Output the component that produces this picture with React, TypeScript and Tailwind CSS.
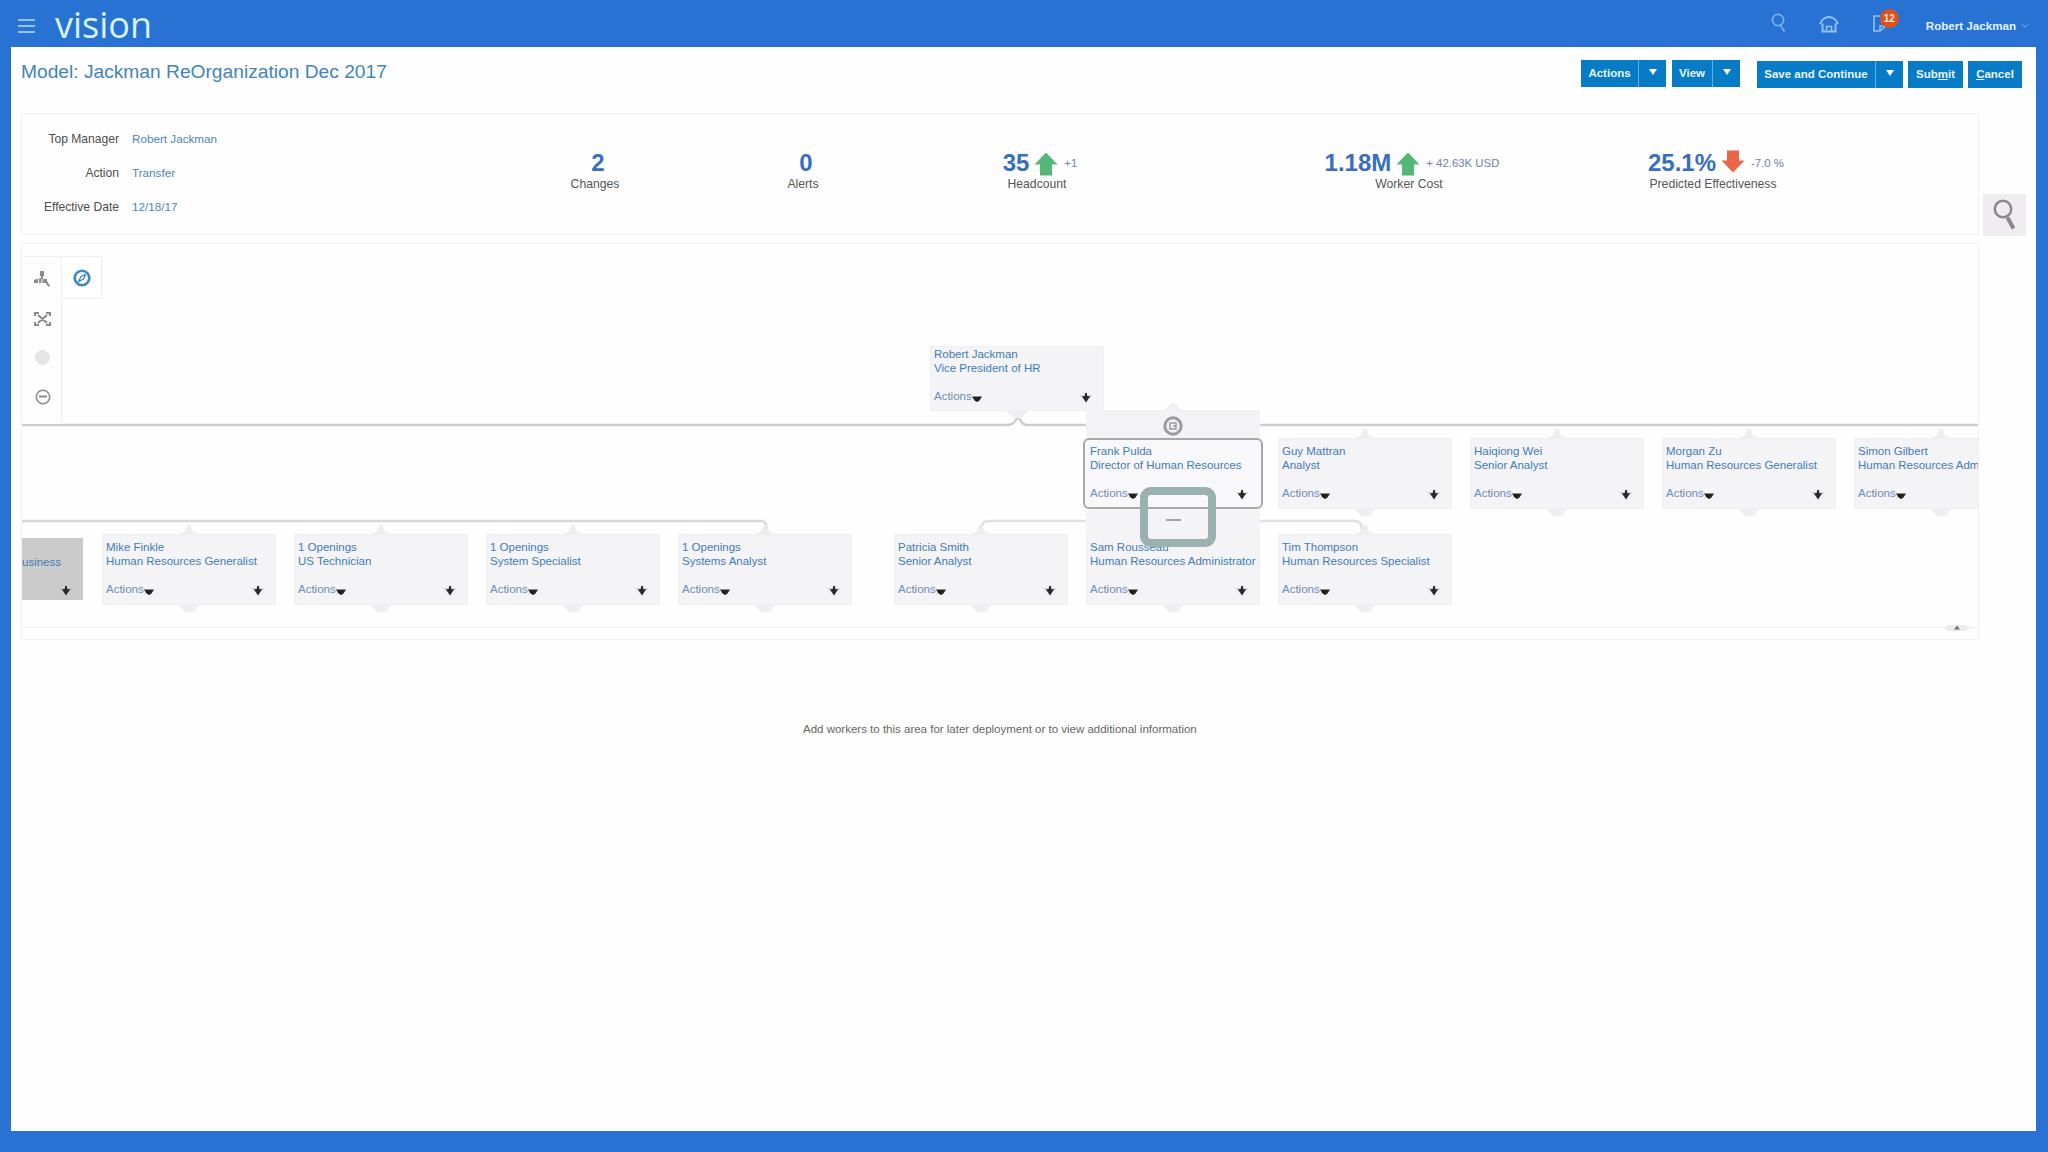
import { ChevronDown, Search } from "lucide-react";

type Person = { name: string; title: string; pos: string; top?: boolean; bottom?: boolean };

const people: Person[] = [
  { name: "Robert Jackman", title: "Vice President of HR", pos: "left-[908px] top-[102px] h-[65px]", bottom: true },
  { name: "Guy Mattran", title: "Analyst", pos: "left-[1256px] top-[194px] h-[71px]", top: true, bottom: true },
  { name: "Haiqiong Wei", title: "Senior Analyst", pos: "left-[1448px] top-[194px] h-[71px]", top: true, bottom: true },
  { name: "Morgan Zu", title: "Human Resources Generalist", pos: "left-[1640px] top-[194px] h-[71px]", top: true, bottom: true },
  { name: "Simon Gilbert", title: "Human Resources Adm", pos: "left-[1832px] top-[194px] h-[71px]", top: true, bottom: true },
  { name: "Mike Finkle", title: "Human Resources Generalist", pos: "left-[80px] top-[290px] h-[71px]", top: true, bottom: true },
  { name: "1 Openings", title: "US Technician", pos: "left-[272px] top-[290px] h-[71px]", top: true, bottom: true },
  { name: "1 Openings", title: "System Specialist", pos: "left-[464px] top-[290px] h-[71px]", top: true, bottom: true },
  { name: "1 Openings", title: "Systems Analyst", pos: "left-[656px] top-[290px] h-[71px]", top: true, bottom: true },
  { name: "Patricia Smith", title: "Senior Analyst", pos: "left-[872px] top-[290px] h-[71px]", top: true, bottom: true },
  { name: "Sam Rousseau", title: "Human Resources Administrator", pos: "left-[1064px] top-[290px] h-[71px]", bottom: true },
  { name: "Tim Thompson", title: "Human Resources Specialist", pos: "left-[1256px] top-[290px] h-[71px]", top: true, bottom: true },
];

function Caret() {
  return (
    <svg width="10" height="6" viewBox="0 0 10 6" className="mt-[5px]">
      <path d="M0 0.5h10L7.5 4.5 5 6 2.5 4.5z" fill="#222" />
    </svg>
  );
}

function DownMark() {
  return (
    <svg width="12" height="10" viewBox="0 0 12 10">
      <path d="M0.5 2.5 6 6l5.5-3.5" fill="none" stroke="#a5a5a8" />
      <path d="M5 0h2v2.5l3 1L6 9.5 2 3.5l3-1z" fill="#2b2b2b" />
    </svg>
  );
}

function CardBody({ name, title }: { name: string; title: string }) {
  return (
    <>
      <div className="whitespace-nowrap text-[11.5px] leading-[13.6px] text-[#3f7db5]">
        <div>{name}</div>
        <div>{title}</div>
      </div>
      <div className="mt-auto flex items-center justify-between pr-[11px]">
        <div className="flex items-center text-[11.5px] leading-[14px] text-[#6f8dbb]">
          Actions
          <Caret />
        </div>
        <div className="mt-[4px]"><DownMark /></div>
      </div>
    </>
  );
}

function PersonCard({ p }: { p: Person }) {
  const root = !p.top && p.name === "Robert Jackman";
  return (
    <div
      className={`absolute flex w-[174px] flex-col border border-[#efeef1] bg-[#f4f3f5] pl-[3px] ${root ? "pb-[7px] pt-[1px]" : "pb-[8px] pt-[6px]"} ${p.pos}`}
    >
      <CardBody name={p.name} title={p.title} />
      {p.top && (
        <svg width="22" height="10" viewBox="0 0 22 10" className="absolute left-[75px] top-[-10px]">
          <path d="M9 0h4c0 5 3 8 9 10H0c6-2 9-5 9-10z" fill="#ececef" />
        </svg>
      )}
      {p.bottom && (
        <svg width="22" height="8" viewBox="0 0 22 8" className="absolute bottom-[-9px] left-[75px]">
          <path d="M0 0h22l-7 7.5H8z" fill="#efeef1" />
        </svg>
      )}
    </div>
  );
}

function Arrow({ down }: { down?: boolean }) {
  return down ? (
    <svg width="24" height="23" viewBox="0 0 24 23" className="mb-[3px]">
      <path d="M6 0.5h12v10h5.5L12 22.5 0.5 10.5H6z" fill="#ea6447" />
    </svg>
  ) : (
    <svg width="24" height="24" viewBox="0 0 24 24" className="mt-[3px]">
      <path d="M12 0.5 23.5 12.5H18v11H6v-11H0.5z" fill="#55b777" />
    </svg>
  );
}

function Metric({ value, label, delta, down, className }: {
  value: string; label: string; delta?: string; down?: boolean; className?: string;
}) {
  return (
    <div className={`flex w-[200px] shrink-0 flex-col items-center pt-[35px] ${className ?? ""}`}>
      <div className="flex h-[27px] items-center pl-[6px]">
        <span className="text-[24px] font-bold leading-[27px] text-[#376fbd]">{value}</span>
        {delta && (
          <>
            <span className="ml-[5px]"><Arrow down={down} /></span>
            <span className="ml-[6px] mt-[2px] whitespace-nowrap text-[11.4px] text-[#7280ab]">{delta}</span>
          </>
        )}
      </div>
      <div className="whitespace-nowrap text-[12.2px] leading-[16px] text-[#555]">{label}</div>
    </div>
  );
}

function Info({ label, value }: { label: string; value: string }) {
  return (
    <div className="flex h-[34px] items-center text-[11.7px]">
      <span className="w-[97px] text-right text-[12.1px] text-[#4c4c4c]">{label}</span>
      <span className="ml-[13px] text-[#4a86bd]">{value}</span>
    </div>
  );
}

function SplitButton({ label, className }: { label: string; className: string }) {
  return (
    <div className={`flex h-[27px] bg-[#077bc6] ${className}`}>
      <span className="flex flex-1 items-center justify-center border-r border-[#5fb1e4]">{label}</span>
      <span className="flex w-[27px] items-center justify-center">
        <svg width="8" height="6" viewBox="0 0 8 6" className="-mt-1"><path d="M0 0h8L4 6z" fill="#fff" /></svg>
      </span>
    </div>
  );
}

function Header() {
  return (
    <header className="flex h-[47px] items-center">
      <div className="ml-[18px] mt-[5px] flex w-[17px] flex-col gap-[4px]">
        <div className="h-[2px] bg-[#8fc4f2]" />
        <div className="h-[2px] bg-[#8fc4f2]" />
        <div className="h-[2px] bg-[#8fc4f2]" />
      </div>
      <div className="ml-[20px] mt-[2px] font-['Open_Sans'] text-[36px] font-medium leading-[47px] text-[#d9f2ff]">vision</div>
      <div className="ml-auto flex items-center pr-[18px] text-[#8fc1f2]">
        <svg width="16" height="20" viewBox="0 0 16 20" fill="none" stroke="#7eb2ee" strokeWidth="1.6" className="mb-[2px]">
          <circle cx="8" cy="7" r="5.600" />
          <path d="m10.500 12.500 4 6" />
        </svg>
        <svg width="20" height="18" viewBox="0 0 20 18" fill="none" stroke="currentColor" strokeWidth="1.6" className="ml-[33px]">
          <path d="M1 9q3-7 9-7t9 7M3.500 8.500v8h13v-8" strokeWidth="2" />
          <path d="M7.500 16v-4.500h5V16" />
        </svg>
        <div className="relative ml-[34px] h-[20px] w-[20px]">
          <svg width="16" height="19" viewBox="0 0 16 19" fill="none" stroke="currentColor" strokeWidth="1.6">
            <path d="M7 2H1v15h6l6-5V9M7 17v-5h6" />
          </svg>
          <div className="absolute left-[7px] top-[-5px] flex h-[19px] w-[19px] items-center justify-center rounded-full bg-[#d9531e] text-[10px] font-bold text-[#ffe1cf]">12</div>
        </div>
        <span className="ml-[33px] mt-[4px] text-[11.6px] font-bold text-[#e4f3ff]">Robert Jackman</span>
        <ChevronDown size={10} className="ml-[4px] mt-[5px]" />
      </div>
    </header>
  );
}

function Connectors() {
  return (
    <svg width="1957" height="396" viewBox="0 0 1957 396" fill="none" className="absolute left-0 top-0">
      <path d="M0 181h985q6 0 8-4l3-4 3 4q2 4 6 4h952" stroke="#cbcdd1" strokeWidth="2.5" />
      <path d="M0 277h739q6 0 6 10" stroke="#d6d8db" strokeWidth="2.5" />
      <path d="M959 287q0-10 7-10h367q7 0 7 10" stroke="#dfe1e4" strokeWidth="2.5" />
    </svg>
  );
}

function Toolbar() {
  return (
    <div className="absolute left-[2px] top-[12px] flex">
      <div className="flex h-[168px] w-[38px] flex-col items-center gap-[23px] border-r border-t border-[#f1f0f2] bg-[#fdfdfd] pt-[14px] text-[#8b8b8b]">
        <svg width="17" height="17" viewBox="0 0 17 17" fill="currentColor">
          <path d="M6 0h4v5H9v3h4v2l3 5-1.500 1-3-4H0V9l3-1 4-1V5H6z" />
          <path d="M4.500 8v4M8 8v4" stroke="#fff" />
        </svg>
        <svg width="17" height="14" viewBox="0 0 17 14" fill="none" stroke="currentColor" strokeWidth="2" className="my-px">
          <path d="M1 4V1h4M12 1h4v3M16 10v3h-4M5 13H1v-3M4 3l9 8M13 3 4 11" />
        </svg>
        <div className="h-[15px] w-[15px] rounded-full bg-[#e5e5e5]" />
        <svg width="16" height="16" viewBox="0 0 16 16" fill="none" stroke="currentColor" strokeWidth="1.5" className="mt-px">
          <circle cx="8" cy="8" r="6.700" />
          <path d="M4 7.500h8" strokeWidth="2" />
        </svg>
      </div>
      <div className="flex h-[43px] w-[40px] items-center justify-center border border-l-0 border-[#efedf1] bg-white">
        <svg width="18" height="18" viewBox="0 0 18 18" fill="none" stroke="#3f87c2">
          <circle cx="9" cy="9" r="7.300" strokeWidth="2.600" />
          <path d="M5.500 12.500 8 7.500l4.500-2-2 4.500z" strokeWidth="1.300" />
        </svg>
      </div>
    </div>
  );
}

function OrgChart() {
  return (
    <section className="relative mt-[7px] h-[397px] w-[1958px] overflow-hidden border border-[#f2f0f4]">
      <Connectors />
      <Toolbar />

      <div className="absolute left-0 top-[294px] flex h-[62px] w-[61px] flex-col overflow-hidden bg-[#cbcbcc]">
        <div className="mt-[17px] w-[38px] whitespace-nowrap text-[11.5px] leading-[14px] text-[#3f7db5]">usiness</div>
        <div className="ml-[38px] mt-[17px]"><DownMark /></div>
      </div>

      {people.map((p, i) => (
        <PersonCard key={i} p={p} />
      ))}

      {/* selected worker, with its promote and collapse strips */}
      <div className="absolute left-[1061px] top-[159px] flex w-[180px] flex-col items-center">
        <svg width="22" height="8" viewBox="0 0 22 8" className="absolute top-[-1px]"><path d="M11 0 20 8H2z" fill="#f0eff2" /></svg>
        <div className="relative mt-[7px] flex h-[28px] w-[174px] items-center justify-center bg-[#f3f2f4]">
          <svg width="20" height="20" viewBox="0 0 20 20" fill="none" stroke="#999b9d" className="mt-[4px]">
            <circle cx="10" cy="10" r="8.200" strokeWidth="3" />
            <path d="M7 7h6v6H7zM10 10h3" strokeWidth="1.500" />
          </svg>
        </div>
        <div className="relative flex h-[71px] w-[180px] flex-col rounded-[6px] border-[2.5px] border-[#a9a9ab] bg-[#f8f7f9] pb-[7px] pl-[5px] pr-[2px] pt-[5px]">
          <CardBody name="Frank Pulda" title="Director of Human Resources" />
        </div>
        <div className="flex h-[26px] w-[174px] items-center justify-center bg-[#f4f3f5]">
          <div className="mb-[4px] h-[2px] w-[15px] bg-[#a4a4a6]" />
        </div>
      </div>
      <div className="absolute left-[1118px] top-[243px] h-[60px] w-[76px] rounded-[11px] border-8 border-[#9bb0b0]" />

      <div className="absolute left-0 top-[383px] h-px w-full bg-[#f2f0f4]" />
      <svg width="26" height="8" viewBox="0 0 26 8" className="absolute left-[1922px] top-[380px]">
        <path d="M0 5 4 1h18l4 4-4 2H4z" fill="#ececee" />
        <path d="M13 1.500 16 5.500h-6z" fill="#707072" />
      </svg>
    </section>
  );
}

export default function App() {
  return (
    <div className="h-[1152px] w-[2048px] overflow-hidden bg-[#2772d2] font-['Liberation_Sans',Arial,sans-serif]">
      <Header />
      <main className="ml-[11px] flex h-[1084px] w-[2025px] flex-col bg-[#fefefe] pl-[10px]">
        <div className="flex h-[66px] items-start pr-[14px] pt-[13px]">
          <h1 className="mt-[-1px] text-[19.2px] leading-[26px] text-[#4484b8]">Model: Jackman ReOrganization Dec 2017</h1>
          <div className="ml-auto flex text-[11.5px] font-bold text-[#e8f6ff]">
            <SplitButton label="Actions" className="w-[85px]" />
            <SplitButton label="View" className="ml-[6px] w-[68px]" />
            <SplitButton label="Save and Continue" className="ml-[17px] mt-px w-[146px]" />
            <div className="ml-[5px] mt-px flex h-[27px] w-[55px] items-center justify-center bg-[#077bc6]">Sub<u>m</u>it</div>
            <div className="ml-[5px] mt-px flex h-[27px] w-[54px] items-center justify-center bg-[#077bc6]"><u>C</u>ancel</div>
          </div>
        </div>

        <div className="flex">
          <section className="flex h-[122px] w-[1958px] shrink-0 border border-[#f2f0f4]">
            <div className="w-[473px] shrink-0 pt-[8px]">
              <Info label="Top Manager" value="Robert Jackman" />
              <Info label="Action" value="Transfer" />
              <Info label="Effective Date" value="12/18/17" />
            </div>
            <Metric value="2" label="Changes" />
            <Metric value="0" label="Alerts" className="ml-[8px]" />
            <Metric value="35" label="Headcount" delta="+1" className="ml-[34px]" />
            <Metric value="1.18M" label="Worker Cost" delta="+ 42.63K USD" className="ml-[172px]" />
            <Metric value="25.1%" label="Predicted Effectiveness" delta="-7.0 %" down className="ml-[104px]" />
          </section>
          <div className="ml-[4px] mt-[81px] flex h-[42px] w-[43px] items-center justify-center bg-[#efedf0]">
            <svg width="24" height="32" viewBox="0 0 24 32" fill="none" stroke="#88888a">
              <circle cx="10" cy="10" r="8.200" strokeWidth="2.500" />
              <path d="m14.500 18.500 6 11" strokeWidth="4" />
            </svg>
          </div>
        </div>

        <OrgChart />

        <p className="mt-[81px] pl-[782px] text-[11.5px] leading-[16px] text-[#666]">
          Add workers to this area for later deployment or to view additional information
        </p>
      </main>
    </div>
  );
}
